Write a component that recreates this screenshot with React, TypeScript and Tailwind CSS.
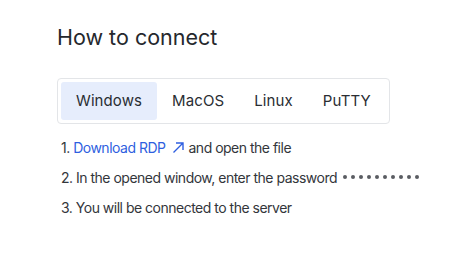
import React from 'react';

const tabs = ['Windows', 'MacOS', 'Linux', 'PuTTY'];

export default function App() {
  return (
    <div className="min-h-screen bg-white text-[#2a2d33] pl-[57px] pt-[21px]" style={{ fontFamily: 'Inter, "Noto Sans", sans-serif' }}>
      <h1 className="text-[21.5px] leading-[32px] font-normal text-[#25282d]">How to connect</h1>

      {/* Tabs */}
      <div className="mt-[25px] inline-flex p-[3px] border border-[#e3e5e8] rounded-[4px]">
        {tabs.map((t, i) => (
          <div
            key={t}
            className={`h-[38px] flex items-center px-[15px] text-[15px] tracking-[0.1px] rounded-[3px] ${i === 0 ? 'bg-[#e6edfc]' : ''}`}
          >
            {t}
          </div>
        ))}
      </div>

      {/* Steps */}
      <ol className="mt-[13px] pl-[4px] text-[14px] tracking-[-0.5px] text-[#33363b] space-y-[10px]">
        <li className="h-[20px] flex items-center">
          1.&nbsp;<span className="text-[#2f5fe0]">Download RDP</span>
          <svg className="ml-[6px] mr-[4px]" width="13" height="13" viewBox="0 0 13 13" fill="none" stroke="#2f5fe0" strokeWidth="1.4">
            <path d="M1.5 11.5 L11 2 M4 2 H11 V9" />
          </svg>
          and open the file
        </li>
        <li className="h-[20px] flex items-center">
          2. In the opened window, enter the password
          <span className="ml-[6px] flex gap-[4.5px]">
            {Array.from({ length: 10 }).map((_, i) => (
              <span key={i} className="w-[3.5px] h-[3.5px] rounded-full bg-[#5a5d62]" />
            ))}
          </span>
        </li>
        <li className="h-[20px] flex items-center">3. You will be connected to the server</li>
      </ol>
    </div>
  );
}
